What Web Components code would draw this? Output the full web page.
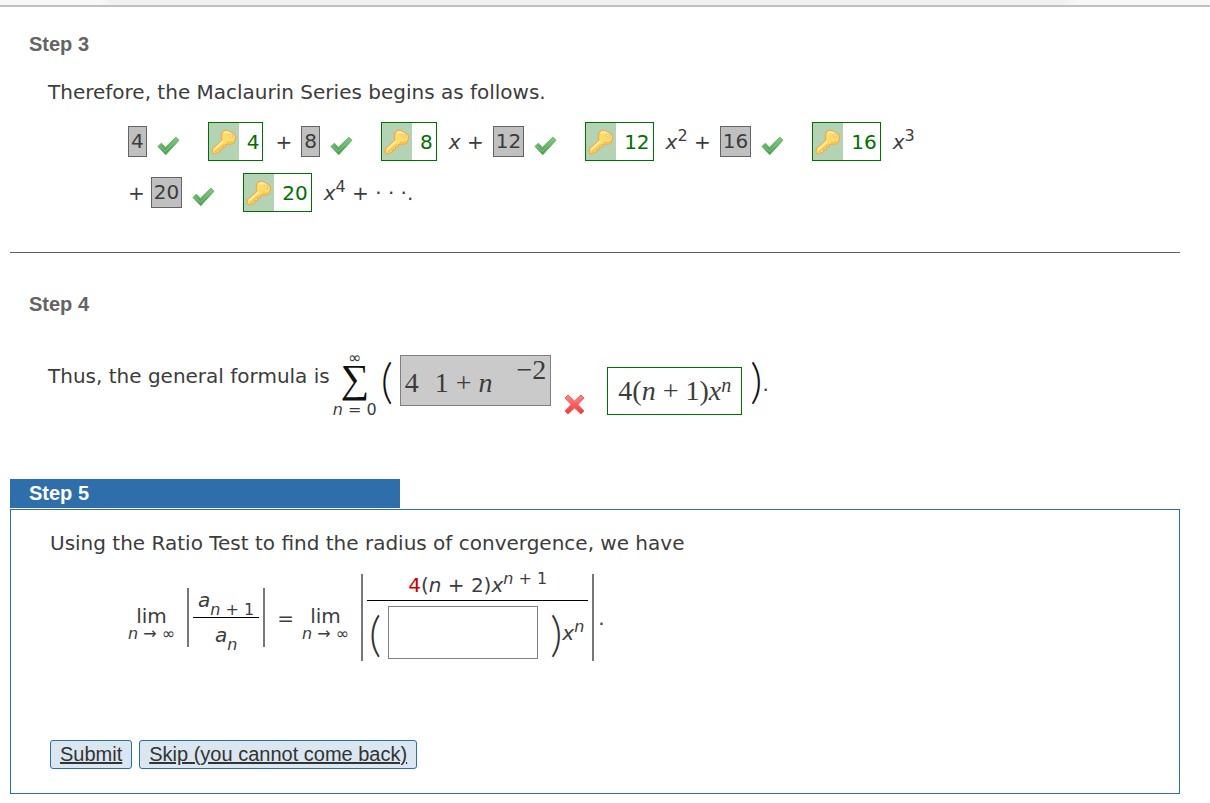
<!DOCTYPE html>
<html lang="en">
<head>
<meta charset="utf-8">
<title>Maclaurin Series</title>
<style>
    body {
        margin: 0;
        background: #fff;
        color: #3c3c3c;
        font: 20px/24px "DejaVu Sans", Verdana, sans-serif;
    }
    main { padding: 0 30px 9px 10px; }
    p { margin: 0; }
</style>
</head>
<body>
<top-strip></top-strip>
<main>
    <tutorial-step label="Step 3">
        <p>Therefore, the Maclaurin Series begins as follows.</p>
        <series-terms></series-terms>
    </tutorial-step>
    <tutorial-step label="Step 4">
        <general-formula>Thus, the general formula is</general-formula>
    </tutorial-step>
    <tutorial-step label="Step 5" active>
        <p>Using the Ratio Test to find the radius of convergence, we have</p>
        <ratio-test></ratio-test>
        <step-actions></step-actions>
    </tutorial-step>
</main>

<script>
// Shared rules for everything that sets math
const mathStyles = `
    i { font-style: italic; }
    .script { font-size: 16px; line-height: 16px; }
    .sup, .sub { font-size: 16px; line-height: 0; }
    .sup { vertical-align: 8px; }
    .sub { vertical-align: -8px; }
    .serif { font-family: "Liberation Serif", "Times New Roman", serif; }
    .paren { font: 300 47px/48px Lato, sans-serif; }
    .open { margin-right: 7px; }
    span { white-space: nowrap; }
`;

class TopStrip extends HTMLElement {
    constructor() {
        super();
        this.attachShadow({ mode: 'open' });
        this.shadowRoot.innerHTML = `
            <style>
                :host {
                    display: block;
                    height: 5px;
                    background: linear-gradient(90deg, #f8f8f8 100px, #f1f1f1 110px, #f1f1f1 88%, #f8f8f8 89%);
                    border-bottom: 2px solid #c0c0c0;
                }
            </style>
        `;
    }
}

class TutorialStep extends HTMLElement {
    constructor() {
        super();
        this.attachShadow({ mode: 'open' });
    }

    connectedCallback() {
        this.shadowRoot.innerHTML = `
            <style>
                :host { display: block; padding-top: 23px; }
                :host(:nth-of-type(2)) { padding-top: 37px; }
                :host([active]) { padding-top: 0; }
                h2 {
                    margin: 0;
                    padding-left: 19px;
                    color: #646464;
                    font: bold 20px/29px "Liberation Sans", Arial, sans-serif;
                }
                .content { padding: 21px 0 40px 38px; border-bottom: 1px solid #646464; }
                :host(:nth-of-type(2)) .content { padding: 31px 0 61px 38px; border: 0; }
                :host([active]) h2 {
                    width: 33.3333%;
                    box-sizing: border-box;
                    background: #2e6eab;
                    color: #fff;
                }
                :host([active]) .content {
                    margin-top: 1px;
                    padding: 21px 39px 24px;
                    border: 1px solid #2e6eab;
                }
            </style>
            <h2>${this.getAttribute('label')}</h2>
            <div class="content"><slot></slot></div>
        `;
    }
}

// Submitted value, its tick, and the answer key beside it
class GradedAnswer extends HTMLElement {
    constructor() {
        super();
        this.attachShadow({ mode: 'open' });
    }

    connectedCallback() {
        const value = this.getAttribute('value');
        this.shadowRoot.innerHTML = `
            <style>
                :host { display: flex; align-items: center; }
                .given {
                    padding: 2px 2px 3px;
                    border: 1px solid #646464;
                    background: #c0c0c0;
                }
                .tick { margin: 8px 28px 0 10px; }
                .key {
                    display: flex;
                    align-items: center;
                    height: 37px;
                    border: 1px solid #007000;
                    color: #007000;
                }
                .badge {
                    display: flex;
                    align-items: center;
                    justify-content: center;
                    width: 30px;
                    height: 37px;
                    background: #b4d3b4;
                }
                .value { padding: 0 3px 0 8px; }
                svg { display: block; }
            </style>
            <span class="given">${value}</span>
            <svg class="tick" width="23" height="20" viewBox="0 0 23 20">
                <defs><linearGradient id="g" x2="0" y2="1"><stop stop-color="#82c982"/><stop offset="1" stop-color="#45984c"/></linearGradient></defs>
                <path d="M1 10.5 4.3 7.2 8.5 11.2 18.8 1.2 22 4.2 8.8 18.8Z" fill="url(#g)" stroke="#68b36b" stroke-linejoin="round"/>
                <path d="M3 10.5 8.5 15.5 19.5 3.5" fill="none" stroke="#80c681"/>
            </svg>
            <span class="key">
                <span class="badge">
                    <svg width="26" height="26" viewBox="0 0 26 26">
                        <path d="M11.3 3.2Q13 .8 16 1.3L21.5 3.8Q25 5.6 24.6 8.8L23.2 13.4Q21.4 15.8 17.6 15L14.6 15.4 14.2 17.8 11.8 18.2 11.4 20.4 9 20.8 8.2 23 2.8 25 1 23.4 1.4 19.6 10.8 11.4Q9.6 6.6 11.3 3.2Z" fill="#fddb66" stroke="#ecab58" stroke-width="1.2" stroke-linejoin="round"/>
                        <path d="M12.6 4.6Q14 2.6 16.4 3L20.6 5M12.4 12 3 20.6" fill="none" stroke="#ffeea6" stroke-width="1.8"/>
                        <path d="M16 13.4Q20.5 14.4 22 12M13 15.4 4 23" fill="none" stroke="#f5bf45" stroke-width="1.3"/>
                        <ellipse cx="20" cy="6.8" rx="2.2" ry="1.2" transform="rotate(38 20 6.8)" fill="#f3efcf" stroke="#e3b060" stroke-width=".8"/>
                    </svg>
                </span>
                <span class="value">${value}</span>
            </span>
        `;
    }
}

class SeriesTerms extends HTMLElement {
    constructor() {
        super();
        this.attachShadow({ mode: 'open' });
        this.shadowRoot.innerHTML = `
            <style>
                ${mathStyles}
                :host { display: block; padding: 18px 0 0 80px; }
                .row { display: flex; align-items: center; }
                .row + .row { margin-top: 12px; }
                .term { margin: 0 9px 0 12px; }
                .lead { margin-right: 6px; }
            </style>
            <div class="row">
                <graded-answer value="4"></graded-answer><span class="term">+</span>
                <graded-answer value="8"></graded-answer><span class="term"><i>x</i> +</span>
                <graded-answer value="12"></graded-answer><span class="term"><i>x</i><span class="sup">2</span> +</span>
                <graded-answer value="16"></graded-answer><span class="term"><i>x</i><span class="sup">3</span></span>
            </div>
            <div class="row">
                <span class="lead">+</span>
                <graded-answer value="20"></graded-answer><span class="term"><i>x</i><span class="sup">4</span> + · · ·.</span>
            </div>
        `;
    }
}

class GeneralFormula extends HTMLElement {
    constructor() {
        super();
        this.attachShadow({ mode: 'open' });
        this.shadowRoot.innerHTML = `
            <style>
                ${mathStyles}
                :host { display: flex; align-items: center; }
                .intro { padding-bottom: 16px; }
                .sum {
                    display: flex;
                    flex-direction: column;
                    align-items: center;
                    margin: 0 4px 0 3px;
                }
                .sigma { padding-bottom: 10px; font-size: 40px; line-height: 26px; }
                .sigma, .paren { color: #111; }
                .paren { padding-bottom: 8px; }
                .given, .key { box-sizing: border-box; display: flex; align-items: center; }
                .given {
                    gap: 16px;
                    height: 51px;
                    margin-bottom: 8px;
                    padding: 6px 4px 0;
                    border: 1px solid #808080;
                    background: #cacaca;
                    font-size: 28px;
                }
                .power { padding: 0 0 26px 8px; }
                .cross { margin: 40px 22px 0 13px; }
                .key {
                    height: 48px;
                    margin: 14px 8px 0 0;
                    padding: 0 10px;
                    border: 1px solid #007000;
                    font-size: 28px;
                }
                .key .sup { font-size: 20px; }
            </style>
            <span class="intro"><slot></slot></span>
            <span class="sum">
                <span class="script">∞</span>
                <span class="sigma serif">∑</span>
                <span class="script"><i>n</i> = 0</span>
            </span>
            <span class="paren open">(</span>
            <span class="given serif"><span>4</span><span>1 + <i>n</i></span><span class="power">−2</span></span>
            <svg class="cross" width="21" height="21" viewBox="0 0 21 21">
                <defs><linearGradient id="r" x2="0" y2="1"><stop stop-color="#ff8888"/><stop offset="1" stop-color="#ef3838"/></linearGradient></defs>
                <path d="M4 1 10.5 7 17 1 20 4 14 10.5 20 17 17 20 10.5 14 4 20 1 17 7 10.5 1 4Z" fill="url(#r)" stroke="#f45d5d" stroke-linejoin="round"/>
            </svg>
            <span class="key serif"><span>4(<i>n</i> + 1)<i>x</i><i class="sup">n</i></span></span>
            <span class="paren">)</span><span>.</span>
        `;
    }
}

class MathLimit extends HTMLElement {
    constructor() {
        super();
        this.attachShadow({ mode: 'open' });
        this.shadowRoot.innerHTML = `
            <style>
                ${mathStyles}
                :host { display: flex; flex-direction: column; align-items: center; padding-top: 12px; }
                .lim { line-height: 20px; }
            </style>
            <span class="lim">lim</span>
            <span class="script"><i>n</i> → ∞</span>
        `;
    }
}

// Fraction between absolute value bars
class AbsFraction extends HTMLElement {
    constructor() {
        super();
        this.attachShadow({ mode: 'open' });
        this.shadowRoot.innerHTML = `
            <style>
                :host {
                    display: grid;
                    justify-items: center;
                    padding: 0 4px;
                    border: solid #777;
                    border-width: 0 2px;
                }
                .line { justify-self: stretch; height: 1px; background: #000; }
            </style>
            <slot name="top"></slot>
            <div class="line"></div>
            <slot name="bottom"></slot>
        `;
    }
}

class RatioTest extends HTMLElement {
    constructor() {
        super();
        this.attachShadow({ mode: 'open' });
        this.shadowRoot.innerHTML = `
            <style>
                ${mathStyles}
                :host { display: flex; align-items: center; padding: 19px 0 0 78px; }
                b { font-weight: normal; color: #d00000; }
                abs-fraction { margin: 0 12px; }
                abs-fraction:last-of-type { margin-right: 4px; }
                .equals { margin-right: 8px; }
                .small { padding: 0 5px 5px; }
                .under { padding: 5px 5px 0; }
                .top { line-height: 22px; padding-bottom: 4px; }
                .bottom { display: flex; align-items: center; padding: 5px 4px 2px 2px; }
                .paren { color: #333; }
                input {
                    box-sizing: border-box;
                    width: 150px;
                    height: 53px;
                    margin-right: 12px;
                    padding: 0 8px;
                    border: 1px solid #808080;
                    background: #fff;
                    color: inherit;
                    font: 20px "DejaVu Sans", Verdana, sans-serif;
                }
            </style>
            <math-limit></math-limit>
            <abs-fraction>
                <span slot="top" class="small"><i>a</i><span class="sub"><i>n</i> + 1</span></span>
                <span slot="bottom" class="under"><i>a</i><i class="sub">n</i></span>
            </abs-fraction>
            <span class="equals">=</span>
            <math-limit></math-limit>
            <abs-fraction>
                <span slot="top" class="top"><b>4</b>(<i>n</i> + 2)<i>x</i><span class="sup"><i>n</i> + 1</span></span>
                <span slot="bottom" class="bottom">
                    <span class="paren open">(</span>
                    <input type="text" aria-label="Factor in the denominator">
                    <span class="paren">)</span><span><i>x</i><i class="sup">n</i></span>
                </span>
            </abs-fraction>
            <span>.</span>
        `;
    }
}

class StepActions extends HTMLElement {
    constructor() {
        super();
        this.attachShadow({ mode: 'open' });
        this.shadowRoot.innerHTML = `
            <style>
                :host { display: flex; gap: 7px; padding-top: 79px; }
                button {
                    height: 29px;
                    padding: 0 9px;
                    border: 1px solid #2e6eab;
                    border-radius: 3px;
                    background: #dae6f0;
                    color: #333;
                    font: 20px/27px "Liberation Sans", Arial, sans-serif;
                    text-decoration: underline;
                    cursor: pointer;
                }
            </style>
            <button type="submit">Submit</button>
            <button type="button">Skip (you cannot come back)</button>
        `;
    }
}

customElements.define('top-strip', TopStrip);
customElements.define('tutorial-step', TutorialStep);
customElements.define('graded-answer', GradedAnswer);
customElements.define('series-terms', SeriesTerms);
customElements.define('general-formula', GeneralFormula);
customElements.define('math-limit', MathLimit);
customElements.define('abs-fraction', AbsFraction);
customElements.define('ratio-test', RatioTest);
customElements.define('step-actions', StepActions);
</script>
</body>
</html>
